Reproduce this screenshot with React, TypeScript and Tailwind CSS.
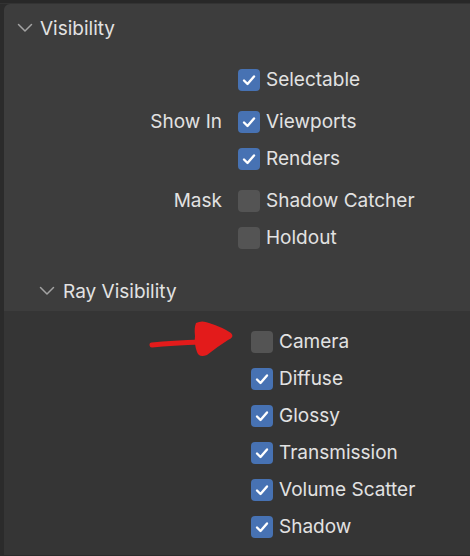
import type { ReactNode } from 'react';

// Blender-style "Visibility" properties panel with a hand-drawn red arrow.

function Chevron(): ReactNode {
  return (
    <svg width="16" height="10" viewBox="0 0 16 10" className="shrink-0">
      <path d="M1.5 1.5 L8 8 L14.5 1.5" fill="none" stroke="#a3a3a3" strokeWidth="1.5" strokeLinecap="round" strokeLinejoin="round" />
    </svg>
  );
}

function Box({ checked }: { checked: boolean }): ReactNode {
  return checked ? (
    <span className="flex h-[22px] w-[22px] shrink-0 items-center justify-center rounded-[4px] bg-[#4772b3]">
      <svg width="14" height="12" viewBox="0 0 14 12">
        <path d="M2 6.5 L5.5 10 L12 2.5" fill="none" stroke="#ffffff" strokeWidth="2.4" strokeLinecap="round" strokeLinejoin="round" />
      </svg>
    </span>
  ) : (
    <span className="h-[22px] w-[22px] shrink-0 rounded-[4px] bg-[#545454]" />
  );
}

function Row({ label, text, checked, labelWidth }: { label?: string; text: string; checked: boolean; labelWidth: string }): ReactNode {
  return (
    <div className="flex h-[37px] items-center">
      <span className={`${labelWidth} shrink-0 pr-4 text-right`}>{label}</span>
      <Box checked={checked} />
      <span className="pl-[6px]">{text}</span>
    </div>
  );
}

export default function App(): ReactNode {
  const top = 'w-[234px]';
  const ray = 'w-[247px]';
  return (
    <div
      className="relative h-[556px] w-[470px] overflow-hidden bg-[#2b2b2b] text-[19px] leading-none text-[#e2e2e2]"
      style={{ fontFamily: 'Inter, "Noto Sans", sans-serif' }}
    >
      <div className="h-[4px] border-b border-[#333333] bg-[#282828]" />
      <div className="ml-[4px] flex h-[551px] flex-col rounded-tl-[6px] bg-[#3d3d3d]">
        <div className="flex h-[47px] items-center gap-[7px] pl-[13px]">
          <Chevron />
          <span className="pt-[1px]">Visibility</span>
        </div>
        <div className="flex flex-col pt-[10px]">
          <Row text="Selectable" checked labelWidth={top} />
          <div className="h-[5px]" />
          <Row label="Show In" text="Viewports" checked labelWidth={top} />
          <Row text="Renders" checked labelWidth={top} />
          <div className="h-[5px]" />
          <Row label="Mask" text="Shadow Catcher" checked={false} labelWidth={top} />
          <Row text="Holdout" checked={false} labelWidth={top} />
        </div>
        <div className="h-[15px]" />
        <div className="flex h-[40px] items-center gap-[8px] pl-[35px]">
          <Chevron />
          <span>Ray Visibility</span>
        </div>
        <div className="flex flex-1 flex-col bg-[#353535] pt-[12px]">
          <Row text="Camera" checked={false} labelWidth={ray} />
          <Row text="Diffuse" checked labelWidth={ray} />
          <Row text="Glossy" checked labelWidth={ray} />
          <Row text="Transmission" checked labelWidth={ray} />
          <Row text="Volume Scatter" checked labelWidth={ray} />
          <Row text="Shadow" checked labelWidth={ray} />
        </div>
      </div>
      <svg className="absolute left-[147px] top-[318px]" width="90" height="42" viewBox="0 0 90 42">
        <path d="M5 27 Q 25 25 55 24" fill="none" stroke="#e31b1b" strokeWidth="5" strokeLinecap="round" />
        <path
          d="M49 5 Q 55 2 62 5 Q 75 9 84 15 Q 88 19 81 22 Q 70 29 60 37 Q 52 40 50 34 Q 47 26 48 18 Q 47 10 49 5 Z"
          fill="#e31b1b"
        />
      </svg>
    </div>
  );
}
